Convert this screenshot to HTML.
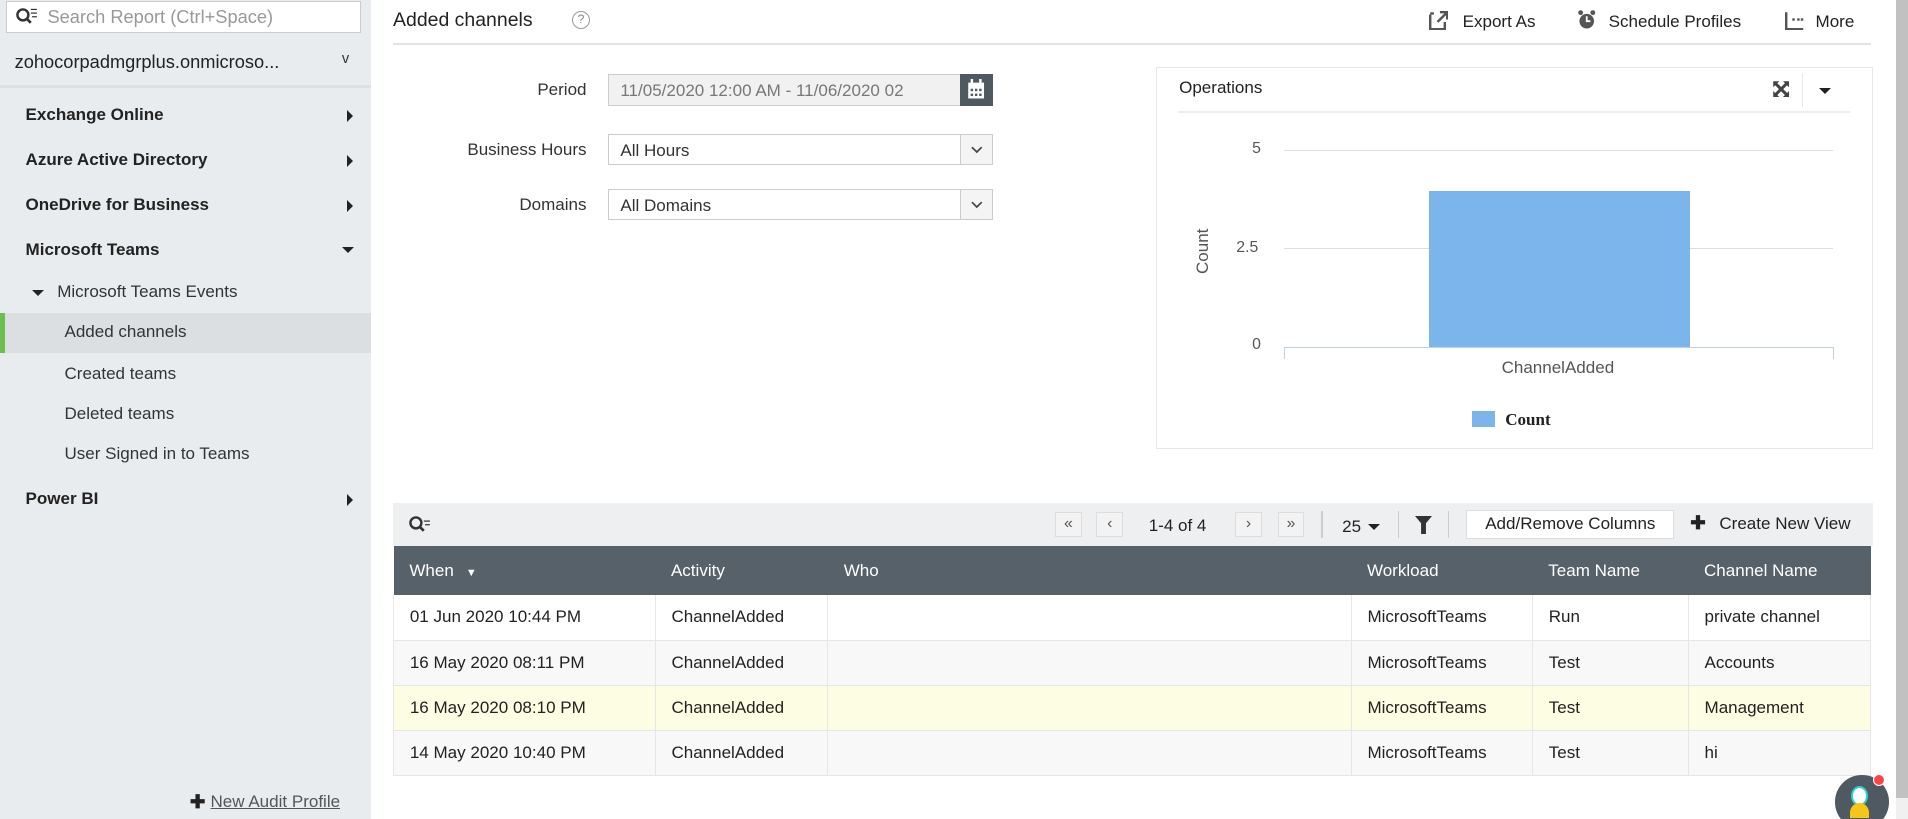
<!DOCTYPE html>
<html><head><meta charset="utf-8"><style>
*{box-sizing:border-box;margin:0;padding:0}
html,body{width:1908px;height:819px;overflow:hidden;background:#fff}
#r{zoom:1.21684;position:relative;width:1568px;height:673px;font-family:"Liberation Sans",sans-serif;font-size:14px;color:#222}
.a{position:absolute;white-space:nowrap}
.side{left:0;top:0;width:305px;height:673px;background:#e9ecee}
.mi{left:21px;font-weight:bold;font-size:14px;color:#222}
.tri{position:absolute;width:0;height:0;border-top:5px solid transparent;border-bottom:5px solid transparent;border-left:5px solid #222}
.trd{position:absolute;width:0;height:0;border-left:5px solid transparent;border-right:5px solid transparent;border-top:5px solid #222}
.sub{left:53px;font-size:14px;color:#333}
.inp{position:absolute;height:26px;border:1px solid #ccc;background:#fff;font-size:14px;padding:5px 9px;color:#333}
.lbl{position:absolute;right:1086px;font-size:14px;color:#333}
.ddb{position:absolute;right:0;top:0;width:26px;height:24px;border-left:1px solid #ccc;background:#f4f4f4}
table{border-collapse:collapse;position:absolute;left:323px;top:449px;width:1215px;font-size:14px}
th{background:#566169;color:#fff;font-weight:normal;text-align:left;height:40px;padding-left:13px}
td{height:37px;padding-left:13px;border:1px solid #e6e6e6;border-top:none;color:#222}
.pb{position:absolute;top:421px;width:22px;height:20px;border:1px solid #ddd;background:#f3f3f3;text-align:center;font-size:13px;line-height:18px;color:#555}
</style></head><body><div id="r">
<div class="a side"></div>
<div class="a" style="left:5px;top:1px;width:292px;height:26px;background:#fff;border:1px solid #ccc"></div>
<svg class="a" style="left:12px;top:6px" width="20" height="16"><circle cx="6.5" cy="6.5" r="4.5" fill="none" stroke="#333" stroke-width="2"/><line x1="10" y1="10" x2="13" y2="13" stroke="#333" stroke-width="2.2"/><line x1="13" y1="2" x2="18" y2="2" stroke="#333"/><line x1="13" y1="5" x2="18" y2="5" stroke="#333"/><line x1="14" y1="8" x2="18" y2="8" stroke="#333"/></svg>
<div class="a" style="left:39px;top:5px;color:#999;font-size:15px">Search Report (Ctrl+Space)</div>
<div class="a" style="left:12px;top:42px;font-size:15px;color:#222">zohocorpadmgrplus.onmicroso...</div>
<div class="a" style="left:281px;top:42px;font-size:12px;color:#333">v</div>
<div class="a" style="left:0;top:70px;width:305px;height:2px;background:#dde0e2"></div>
<div class="a mi" style="top:86px">Exchange Online</div><div class="tri" style="left:285px;top:90px"></div>
<div class="a mi" style="top:123px">Azure Active Directory</div><div class="tri" style="left:285px;top:127px"></div>
<div class="a mi" style="top:160px">OneDrive for Business</div><div class="tri" style="left:285px;top:164px"></div>
<div class="a mi" style="top:197px">Microsoft Teams</div><div class="trd" style="left:281px;top:203px"></div>
<div class="trd" style="left:26px;top:238px"></div>
<div class="a sub" style="left:47px;top:232px">Microsoft Teams Events</div>
<div class="a" style="left:0;top:257px;width:305px;height:33px;background:#dcdfe1"></div>
<div class="a" style="left:0;top:257px;width:4px;height:33px;background:#6bbf4e"></div>
<div class="a sub" style="top:265px">Added channels</div>
<div class="a sub" style="top:299px">Created teams</div>
<div class="a sub" style="top:332px">Deleted teams</div>
<div class="a sub" style="top:365px">User Signed in to Teams</div>
<div class="a mi" style="top:402px">Power BI</div><div class="tri" style="left:285px;top:406px"></div>
<div class="a" style="left:156px;top:650px;font-size:15px;font-weight:bold;color:#222">✚</div>
<div class="a" style="left:173px;top:651px;color:#555;text-decoration:underline">New Audit Profile</div>

<div class="a" style="left:323px;top:7px;font-size:16px;color:#222">Added channels</div>
<div class="a" style="left:470px;top:9px;width:15px;height:15px;border:1px solid #999;border-radius:50%;font-size:10px;text-align:center;line-height:13px;color:#888">?</div>
<div class="a" style="left:323px;top:35px;width:1215px;height:2px;background:#e3e3e3"></div>
<svg class="a" style="left:1174px;top:9px" width="16" height="16"><path d="M1 3v12h12V9M4 2H1M9 1h6v6M15 1 7 9" fill="none" stroke="#555" stroke-width="2"/></svg>
<div class="a" style="left:1202px;top:10px">Export As</div>
<svg class="a" style="left:1296px;top:7px" width="16" height="18"><circle cx="8" cy="10" r="6" fill="#555"/><path d="M8 6v4h3" stroke="#fff" stroke-width="1.5" fill="none"/><circle cx="3" cy="3" r="2" fill="#555"/><circle cx="13" cy="3" r="2" fill="#555"/></svg>
<div class="a" style="left:1322px;top:10px">Schedule Profiles</div>
<svg class="a" style="left:1467px;top:9px" width="16" height="16"><path d="M1 1v14h14" fill="none" stroke="#555" stroke-width="2"/><rect x="6" y="6" width="2" height="2" fill="#555"/><rect x="10" y="6" width="2" height="2" fill="#555"/><rect x="13" y="6" width="2" height="2" fill="#555"/></svg>
<div class="a" style="left:1492px;top:10px">More</div>

<div class="lbl" style="top:66px">Period</div>
<div class="inp" style="left:500px;top:61px;width:290px;background:#f1f1f1;color:#777;overflow:hidden">11/05/2020 12:00 AM - 11/06/2020 02</div>
<div class="a" style="left:789px;top:61px;width:27px;height:26px;background:#4e5961"></div>
<svg class="a" style="left:795px;top:65px" width="15" height="17"><rect x="1" y="3" width="13" height="13" fill="#fff"/><rect x="3" y="0" width="2" height="4" fill="#fff"/><rect x="10" y="0" width="2" height="4" fill="#fff"/><g fill="#4e5961"><rect x="3" y="8" width="2" height="2"/><rect x="6.5" y="8" width="2" height="2"/><rect x="10" y="8" width="2" height="2"/><rect x="3" y="12" width="2" height="2"/><rect x="6.5" y="12" width="2" height="2"/><rect x="10" y="12" width="2" height="2"/></g></svg>
<div class="lbl" style="top:115px">Business Hours</div>
<div class="inp" style="left:500px;top:110px;width:316px">All Hours<div class="ddb"><svg width="26" height="24"><path d="M9 10l4 4 4-4" stroke="#444" stroke-width="1.4" fill="none"/></svg></div></div>
<div class="lbl" style="top:160px">Domains</div>
<div class="inp" style="left:500px;top:155px;width:316px">All Domains<div class="ddb"><svg width="26" height="24"><path d="M9 10l4 4 4-4" stroke="#444" stroke-width="1.4" fill="none"/></svg></div></div>

<div class="a" style="left:950px;top:55px;width:589px;height:314px;border:1px solid #e6e6e6"></div>
<div class="a" style="left:969px;top:64px;font-size:14px">Operations</div>
<svg class="a" style="left:1456px;top:66px" width="15" height="15"><path d="M2 2l11 11M13 2 2 13" stroke="#444" stroke-width="2.5"/><path d="M1 1h5L1 6zM14 1H9l5 5zM1 14h5l-5-5zM14 14H9l5-5z" fill="#444"/></svg>
<div class="a" style="left:1481px;top:60px;width:1px;height:28px;background:#e6e6e6"></div>
<div class="trd" style="left:1495px;top:72px"></div>
<div class="a" style="left:968px;top:91px;width:552px;height:2px;background:#eee"></div>
<div class="a" style="left:1055px;top:123px;width:451px;height:1px;background:#ddd"></div>
<div class="a" style="left:1055px;top:204px;width:451px;height:1px;background:#ddd"></div>
<div class="a" style="left:1174px;top:157px;width:215px;height:128px;background:#7cb5ec"></div>
<div class="a" style="left:1055px;top:285px;width:451px;height:1px;background:#c0d0e0"></div>
<div class="a" style="left:1055px;top:285px;width:1px;height:10px;background:#c0d0e0"></div>
<div class="a" style="left:1506px;top:285px;width:1px;height:10px;background:#c0d0e0"></div>
<div class="a" style="left:1029px;top:115px;font-size:13px;color:#555">5</div>
<div class="a" style="left:1016px;top:196px;font-size:13px;color:#555">2.5</div>
<div class="a" style="left:1029px;top:276px;font-size:13px;color:#555">0</div>
<div class="a" style="left:980px;top:225px;font-size:14px;color:#555;transform:rotate(-90deg);transform-origin:left top">Count</div>
<div class="a" style="left:1234px;top:294px;font-size:14px;color:#555">ChannelAdded</div>
<div class="a" style="left:1210px;top:338px;width:19px;height:13px;background:#7cb5ec"></div>
<div class="a" style="left:1237px;top:337px;font-family:'Liberation Serif',serif;font-weight:bold;font-size:14px">Count</div>

<div class="a" style="left:323px;top:413px;width:1216px;height:36px;background:#eeeff0"></div>
<svg class="a" style="left:335px;top:423px" width="20" height="16"><circle cx="6.5" cy="6.5" r="4.5" fill="none" stroke="#333" stroke-width="2"/><line x1="10" y1="10" x2="13" y2="13" stroke="#333" stroke-width="2.2"/><line x1="13" y1="5" x2="18" y2="5" stroke="#333"/><line x1="14" y1="8" x2="18" y2="8" stroke="#333"/></svg>
<div class="pb" style="left:867px">«</div><div class="pb" style="left:901px">‹</div>
<div class="a" style="left:944px;top:424px">1-4 of 4</div>
<div class="pb" style="left:1015px">›</div><div class="pb" style="left:1050px">»</div>
<div class="a" style="left:1086px;top:420px;width:1px;height:22px;background:#ccc"></div>
<div class="a" style="left:1103px;top:425px">25</div><div class="trd" style="left:1124px;top:431px"></div>
<div class="a" style="left:1149px;top:420px;width:1px;height:22px;background:#ccc"></div>
<svg class="a" style="left:1163px;top:424px" width="14" height="15"><path d="M0 0h14L9 6v9H5V6z" fill="#333"/></svg>
<div class="a" style="left:1190px;top:420px;width:1px;height:22px;background:#ccc"></div>
<div class="a" style="left:1205px;top:419px;width:171px;height:24px;background:#fff;border:1px solid #ddd;text-align:center;line-height:22px">Add/Remove Columns</div>
<div class="a" style="left:1389px;top:421px;font-weight:bold;font-size:15px">✚</div>
<div class="a" style="left:1413px;top:422px">Create New View</div>

<table>
<tr><th style="width:215px">When <span style="font-size:9px;margin-left:6px">▼</span></th><th style="width:142px">Activity</th><th style="width:430px">Who</th><th style="width:149px">Workload</th><th style="width:128px">Team Name</th><th>Channel Name</th></tr>
<tr><td>01 Jun 2020 10:44 PM</td><td>ChannelAdded</td><td></td><td>MicrosoftTeams</td><td>Run</td><td>private channel</td></tr>
<tr style="background:#f8f8f8"><td>16 May 2020 08:11 PM</td><td>ChannelAdded</td><td></td><td>MicrosoftTeams</td><td>Test</td><td>Accounts</td></tr>
<tr style="background:#fdfde3"><td>16 May 2020 08:10 PM</td><td>ChannelAdded</td><td></td><td>MicrosoftTeams</td><td>Test</td><td>Management</td></tr>
<tr style="background:#f8f8f8"><td>14 May 2020 10:40 PM</td><td>ChannelAdded</td><td></td><td>MicrosoftTeams</td><td>Test</td><td>hi</td></tr>
</table>

<div class="a" style="left:1558px;top:0;width:10px;height:673px;background:#f0f0f0"></div>
<div class="a" style="left:1558px;top:0;width:10px;height:656px;background:#c1c1c1"></div>
<div class="a" style="left:1508px;top:637px;width:44px;height:44px;border-radius:50%;background:#4e5961"></div>
<div class="a" style="left:1521px;top:646px;width:14px;height:16px;border-radius:50%;border:2px solid #3cc;background:#fff"></div>
<div class="a" style="left:1520px;top:660px;width:16px;height:12px;border-radius:8px 8px 0 0;background:#f5c518"></div>
<div class="a" style="left:1539px;top:636px;width:10px;height:10px;border-radius:50%;background:#f44;border:1px solid #fff"></div>
</div></body></html>
